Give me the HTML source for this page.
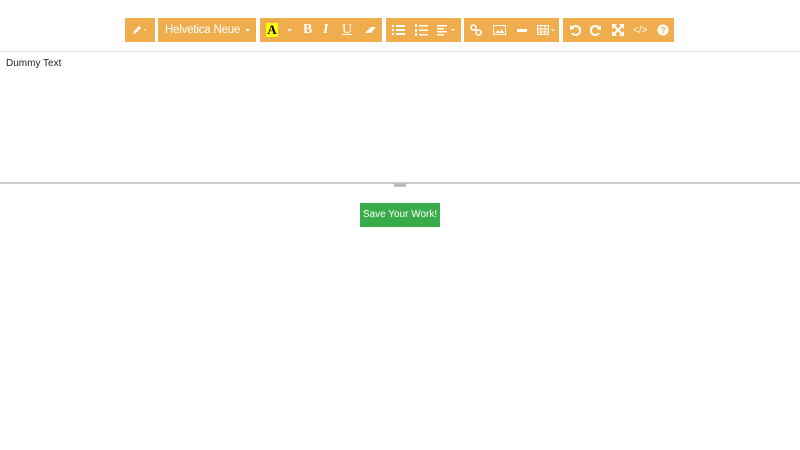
<!DOCTYPE html>
<html><head><style>
body{margin:0;width:800px;height:450px;background:#fff;font-family:"Liberation Sans",sans-serif;position:relative;overflow:hidden}
.g{position:absolute;top:18px;height:24px;background:#f0ad4e}
.i{position:absolute;top:0;height:24px;color:#fff;font-size:12px;line-height:24px;text-align:center;white-space:nowrap}
svg{position:absolute}
</style></head><body>
<div class="g" style="left:125px;width:30px">
<svg style="left:7px;top:7px" width="16" height="10" viewBox="0 0 16 10"><path d="M1 9 L2 6 L7 1 L9 3 L4 8 Z" fill="#fff"/><path d="M12 4 L14 4 L13 6Z" fill="#fff"/></svg></div>
<div class="g" style="left:158px;width:98px"><div class="i" style="left:7px;font-size:11.5px;letter-spacing:-0.2px">Helvetica Neue</div>
<svg style="left:87px;top:11px" width="6" height="3"><path d="M0 0H5L2.5 2.5Z" fill="#fff"/></svg></div>
<div class="g" style="left:260px;width:122px">
<div style="position:absolute;left:6px;top:5px;width:12px;height:14px;background:#ff0;color:#000;font:bold 13px 'Liberation Serif',serif;text-align:center;line-height:14px">A</div>
<svg style="left:27px;top:11px" width="6" height="3"><path d="M0 0H5L2.5 2.5Z" fill="#fff"/></svg>
<div class="i" style="left:43px;font:bold 14px 'Liberation Serif',serif;line-height:24px">B</div>
<div class="i" style="left:63px;font:italic bold 14px 'Liberation Serif',serif;line-height:24px">I</div>
<div class="i" style="left:82px;font:14px 'Liberation Serif',serif;line-height:24px;text-decoration:underline">U</div>
<svg style="left:104px;top:7px" width="14" height="10"><path d="M1 8 L7 2 L12 2 L7 8 Z" fill="#fff"/></svg></div>
<div class="g" style="left:386px;width:75px">
<svg style="left:6px;top:7px" width="13" height="10"><g fill="#fff"><rect x="0" y="0" width="2" height="2"/><rect x="0" y="4" width="2" height="2"/><rect x="0" y="8" width="2" height="2"/><rect x="4" y="0" width="9" height="2"/><rect x="4" y="4" width="9" height="2"/><rect x="4" y="8" width="9" height="2"/></g></svg>
<svg style="left:29px;top:6px" width="13" height="12"><g fill="#fff"><rect x="0" y="0" width="2" height="3"/><rect x="0" y="5" width="2" height="3"/><rect x="0" y="9" width="2" height="3"/><rect x="4" y="1" width="9" height="1.5"/><rect x="4" y="5.5" width="9" height="1.5"/><rect x="4" y="10" width="9" height="1.5"/></g></svg>
<svg style="left:51px;top:7px" width="20" height="11"><g fill="#fff"><rect x="0" y="0" width="10" height="1.5"/><rect x="0" y="3" width="7" height="1.5"/><rect x="0" y="6" width="10" height="1.5"/><rect x="0" y="9" width="7" height="1.5"/><path d="M14 4 L18 4 L16 6Z"/></g></svg></div>
<div class="g" style="left:464px;width:95px">
<svg style="left:6px;top:6px" width="12" height="12"><g stroke="#fff" stroke-width="1.6" fill="none"><circle cx="3.5" cy="3.5" r="2.5"/><circle cx="8.5" cy="8.5" r="2.5"/><path d="M5 5 L7 7"/></g></svg>
<svg style="left:29px;top:7px" width="13" height="10"><rect x="0.5" y="0.5" width="12" height="9" stroke="#fff" fill="none"/><path d="M2 8 L5 5 L7 7 L9 4 L11 8Z" fill="#fff"/></svg>
<div style="position:absolute;left:53px;top:11px;width:10px;height:3px;background:#fff"></div>
<svg style="left:73px;top:7px" width="20" height="10"><g stroke="#fff" fill="none"><rect x="0.5" y="0.5" width="11" height="9"/><path d="M0 4H12M0 7H12M4 0V10M8 0V10"/></g><path d="M14 4 L18 4 L16 6Z" fill="#fff"/></svg></div>
<div class="g" style="left:563px;width:111px">
<svg style="left:6px;top:6px" width="12" height="12"><path d="M3 4 A4.5 4.5 0 1 1 3 9" stroke="#fff" stroke-width="2" fill="none"/><path d="M1 1 L1 6 L5 5Z" fill="#fff"/></svg>
<svg style="left:27px;top:6px" width="12" height="12"><path d="M9 4 A4.5 4.5 0 1 0 9 9" stroke="#fff" stroke-width="2" fill="none"/><path d="M11 1 L11 6 L7 5Z" fill="#fff"/></svg>
<svg style="left:49px;top:6px" width="12" height="12"><g fill="#fff"><path d="M0 0H5L0 5Z M12 0V5L7 0Z M0 12V7L5 12Z M12 12H7L12 7Z"/></g><path d="M2 2L10 10M10 2L2 10" stroke="#fff" stroke-width="2"/></svg>
<div class="i" style="left:70px;font-size:10px;line-height:25px">&lt;/&gt;</div>
<svg style="left:94px;top:6px" width="12" height="12"><circle cx="6" cy="6" r="5.5" fill="#fff"/><text x="6" y="9.5" font-size="9" font-weight="bold" text-anchor="middle" fill="#f0ad4e" font-family="Liberation Sans">?</text></svg></div>
<div style="position:absolute;left:0;top:51px;width:800px;height:1px;background:#ddd"></div>
<div style="position:absolute;left:6px;top:58px;font-size:10px;color:#222">Dummy Text</div>
<div style="position:absolute;left:0;top:182px;width:800px;height:2px;background:#ccc"></div>
<div style="position:absolute;left:394px;top:183px;width:12px;height:4px;background:#bbb"></div>
<div style="position:absolute;left:360px;top:203px;width:80px;height:24px;background:#39ac4a;color:#fff;font-size:10px;line-height:24px;text-align:center">Save Your Work!</div>
</body></html>
